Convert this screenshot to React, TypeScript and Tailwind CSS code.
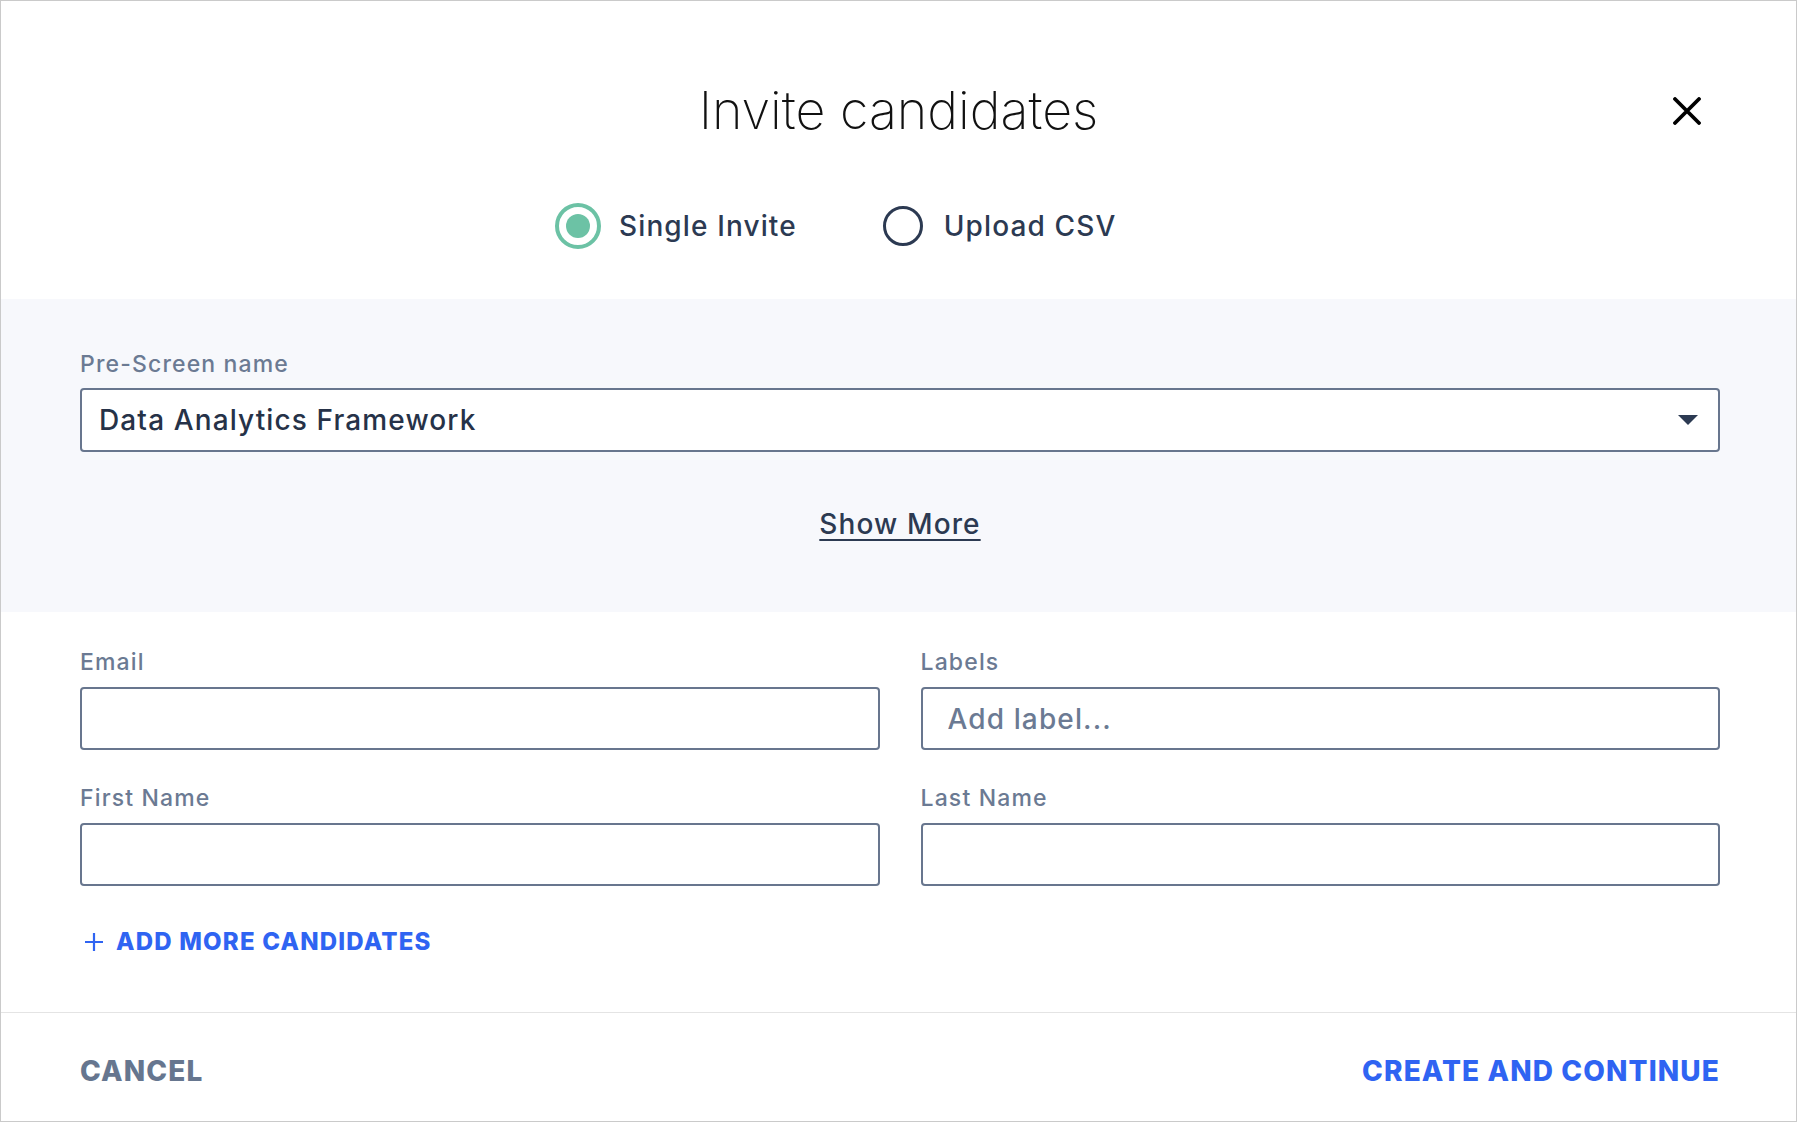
import { useState } from 'react';

const font = { fontFamily: 'Inter, "Noto Sans", sans-serif' };

function Radio({ checked, label, onClick }: { checked: boolean; label: string; onClick: () => void }) {
  return (
    <button onClick={onClick} className="flex items-center gap-[18px]">
      {checked ? (
        <span className="flex h-[46px] w-[46px] items-center justify-center rounded-full border-[4px] border-[#6cc2a5] bg-white">
          <span className="h-[24px] w-[24px] rounded-full bg-[#6cc2a5]" />
        </span>
      ) : (
        <span className="flex h-[46px] w-[46px] items-center justify-center">
          <span className="h-[40px] w-[40px] rounded-full border-[3.5px] border-[#2c3a52]" />
        </span>
      )}
      <span className="text-[28px] font-medium tracking-[0.04em] text-[#2c3a52]">{label}</span>
    </button>
  );
}

function Field({ label, placeholder }: { label: string; placeholder?: string }) {
  return (
    <div className="flex flex-col">
      <label className="mb-[10px] text-[23px] leading-[30px] font-medium tracking-[0.05em] text-[#6b7a93]">{label}</label>
      <input
        placeholder={placeholder}
        className="h-[63px] w-full rounded-[4px] border-2 border-[#68768e] bg-white px-[25px] text-[28px] font-medium tracking-[0.04em] text-[#263248] outline-none placeholder:text-[#6b7a93]"
      />
    </div>
  );
}

export default function App() {
  const [mode, setMode] = useState<'single' | 'csv'>('single');

  return (
    <div style={font} className="h-[1122px] w-[1797px] border border-[#cacaca] bg-white flex flex-col">
      {/* Header */}
      <div className="grid grid-cols-[1fr_auto_1fr] items-center pl-[94px] pr-[94px] pt-[80px]">
        <div />
        <h1 className="text-[52px] leading-[60px] font-extralight text-[#111]">Invite candidates</h1>
        <div className="flex justify-end">
          <button aria-label="Close" className="flex h-[30px] w-[30px] items-center justify-center">
            <svg width="28" height="28" viewBox="0 0 28 28" fill="none" stroke="#000" strokeWidth="3.8" strokeLinecap="round">
              <path d="M2 2 L26 26 M26 2 L2 26" />
            </svg>
          </button>
        </div>
      </div>

      <div className="mt-[62px] mb-[50px] flex gap-[83px] pl-[554px]">
        <Radio checked={mode === 'single'} label="Single Invite" onClick={() => setMode('single')} />
        <Radio checked={mode === 'csv'} label="Upload CSV" onClick={() => setMode('csv')} />
      </div>

      {/* Pre-screen */}
      <div className="bg-[#f7f8fc] pl-[79px] pr-[76px] pt-[50px] pb-[71px]">
        <label className="mb-[9px] block text-[23px] leading-[30px] font-medium tracking-[0.05em] text-[#6b7a93]">Pre-Screen name</label>
        <div className="flex h-[64px] items-center justify-between rounded-[4px] border-2 border-[#68768e] bg-white pl-[17px] pr-[20px]">
          <span className="text-[28px] font-medium tracking-[0.04em] text-[#263248]">Data Analytics Framework</span>
          <svg width="20" height="10" viewBox="0 0 20 10">
            <path d="M0 0 H20 L10 10 Z" fill="#2c3a52" />
          </svg>
        </div>
        <div className="mt-[55px] flex justify-center">
          <button className="text-[28px] leading-[34px] font-medium tracking-[0.04em] text-[#2c3a52] underline underline-offset-[5px] decoration-[2px]">
            Show More
          </button>
        </div>
      </div>

      {/* Candidate fields */}
      <div className="flex-1 pl-[79px] pr-[76px] pt-[35px]">
        <div className="grid grid-cols-2 gap-x-[41px] gap-y-[33px]">
          <Field label="Email" />
          <Field label="Labels" placeholder="Add label..." />
          <Field label="First Name" />
          <Field label="Last Name" />
        </div>
        <button className="mt-[42px] flex items-center gap-[13px] pl-[5px] text-[24px] leading-[28px] font-extrabold tracking-[0.05em] text-[#2f64f2]">
          <svg width="18" height="18" viewBox="0 0 18 18" stroke="#2f64f2" strokeWidth="2.2">
            <path d="M9 0 V18 M0 9 H18" />
          </svg>
          ADD MORE CANDIDATES
        </button>
      </div>

      {/* Footer */}
      <div className="flex h-[109px] items-center justify-between border-t border-[#e4e4e4] pl-[79px] pr-[76px] pt-[7px]">
        <button className="text-[28px] font-extrabold tracking-[0.04em] text-[#66768f]">CANCEL</button>
        <button className="text-[28px] font-extrabold tracking-[0.04em] text-[#2f64f2]">CREATE AND CONTINUE</button>
      </div>
    </div>
  );
}
